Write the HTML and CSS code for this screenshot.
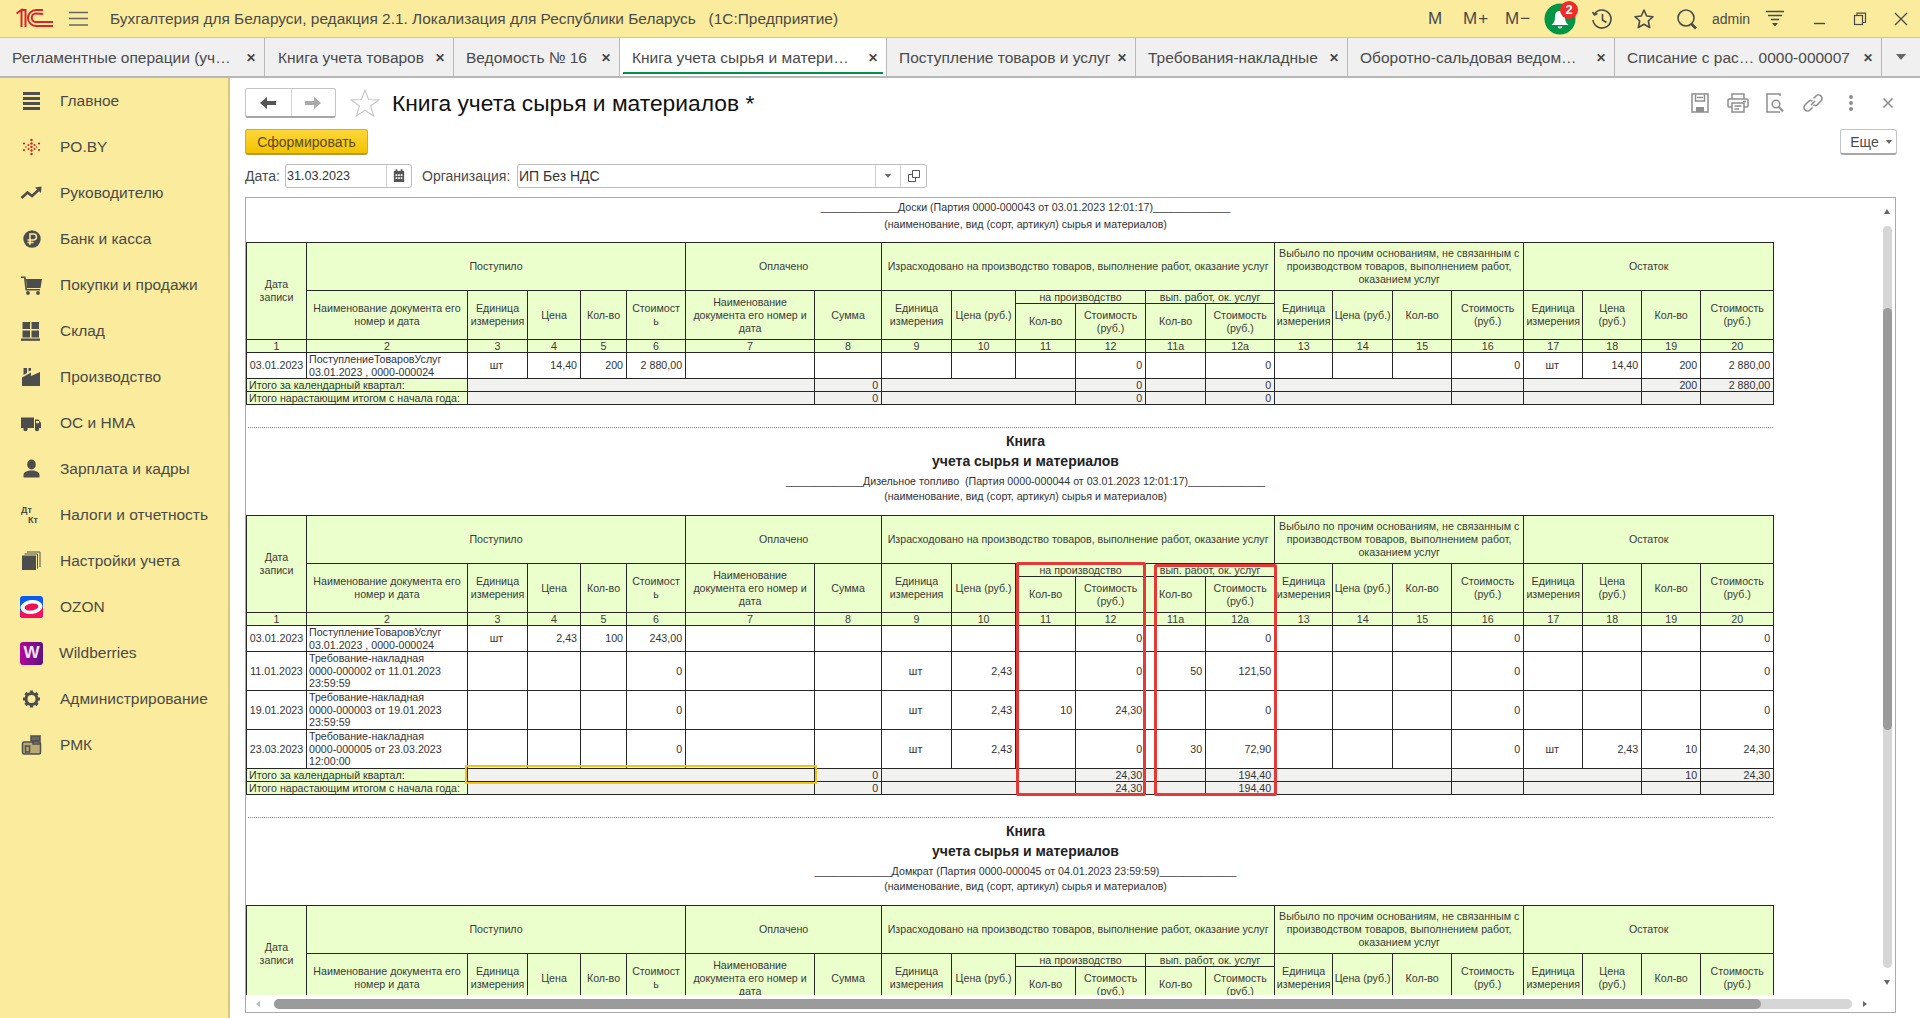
FILE: index.html
```html
<!DOCTYPE html>
<html lang="ru">
<head>
<meta charset="utf-8">
<title>Книга учета сырья и материалов</title>
<link rel="stylesheet" href="styles.css">
</head>
<body>
<header class="topbar">
  <svg class="logo" viewBox="0 0 40 20" width="40" height="20" fill="none" stroke="#d8232a" stroke-width="2"><path d="M0.5 5.5 L5.5 2 V19 M5.5 2 H9.5 V19"/><path d="M27 2 H20 a7.8 7.8 0 0 0 0 16 H37"/><path d="M27 6 C25 5.5 23 5.5 20 5.5 a4 4 0 0 0 0 8.5 H37"/></svg>
  <svg class="burger" viewBox="0 0 20 16" width="20" height="16" stroke="#666" stroke-width="1.4"><path d="M0 1.5H19M0 7.5H19M0 14H19"/></svg>
  <div class="apptitle">Бухгалтерия для Беларуси, редакция 2.1. Локализация для Республики Беларусь&nbsp;&nbsp; (1С:Предприятие)</div>
  <div class="tools">
    <span class="tool mem m1">M</span>
    <span class="tool mem m2">M+</span>
    <span class="tool mem m3">M−</span>
    <span class="tool bell">
      <svg viewBox="0 0 32 32" width="32" height="32"><circle cx="16" cy="16" r="15.5" fill="#009646"/><path d="M16 8 c-4 0-5 3-5 6 c0 4-1 6-3.500 8 H24.500 c-2.500-2-3.500-4-3.500-8 c0-3-1-6-5-6z M13.500 23.500 a2.500 2 0 0 0 5 0z" fill="#fff"/></svg>
      <span class="badge">2</span>
    </span>
    <span class="tool w42"><svg viewBox="0 0 22 22" width="22" height="22" fill="none" stroke="#4a4a4a" stroke-width="1.6"><path d="M3.500 6 A9 9 0 1 1 2 12"/><path d="M1.500 4 L3.500 7 L6.500 5.500" /><path d="M11.500 6 V12 L15.500 14.500"/></svg></span>
    <span class="tool w42"><svg viewBox="0 0 22 22" width="22" height="22" fill="none" stroke="#4a4a4a" stroke-width="1.6" stroke-linejoin="round"><path d="M11 2 L13.700 8 L20 8.700 L15.300 13 L16.700 19.500 L11 16.200 L5.300 19.500 L6.700 13 L2 8.700 L8.300 8z"/></svg></span>
    <span class="tool w43"><svg viewBox="0 0 22 22" width="22" height="22" fill="none" stroke="#4a4a4a" stroke-width="1.6"><circle cx="10" cy="10" r="8"/><path d="M15.500 16 L20 20.500" stroke-width="2.600"/></svg></span>
    <span class="tool admin">admin</span>
    <span class="tool filter"><svg viewBox="0 0 20 18" width="20" height="18" fill="none" stroke="#4a4a4a" stroke-width="1.300"><path d="M1 1.500H19M3 5.500H17M6 9.500H14"/><path d="M7 13 H13 L10 16.500z" fill="#4a4a4a" stroke="none"/></svg></span>
    <span class="tool w38"><svg viewBox="0 0 14 14" width="14" height="14" stroke="#4a4a4a" stroke-width="1.400"><path d="M2 11.500H13"/></svg></span>
    <span class="tool w44"><svg viewBox="0 0 14 14" width="14" height="14" fill="none" stroke="#4a4a4a" stroke-width="1.200"><rect x="1.500" y="3.500" width="8" height="9"/><path d="M4 3.500V1.200H12.500V10.500H9.500"/></svg></span>
    <span class="tool w38"><svg viewBox="0 0 14 14" width="14" height="14" stroke="#4a4a4a" stroke-width="1.300"><path d="M1 1L13 13M13 1L1 13"/></svg></span>
  </div>
</header>

<nav class="tabs">
  <div class="tab t1"><span class="tabtext">Регламентные операции (уч…</span><span class="cl">✕</span></div>
  <div class="tab t2"><span class="tabtext">Книга учета товаров</span><span class="cl">✕</span></div>
  <div class="tab t3"><span class="tabtext">Ведомость № 16</span><span class="cl">✕</span></div>
  <div class="tab t4 active"><span class="tabtext">Книга учета сырья и матери…</span><span class="cl">✕</span></div>
  <div class="tab t5"><span class="tabtext">Поступление товаров и услуг</span><span class="cl">✕</span></div>
  <div class="tab t6"><span class="tabtext">Требования-накладные</span><span class="cl">✕</span></div>
  <div class="tab t7"><span class="tabtext">Оборотно-сальдовая ведом…</span><span class="cl">✕</span></div>
  <div class="tab t8"><span class="tabtext">Списание с рас… 0000-000007</span><span class="cl">✕</span></div>
  <div class="tabmore"><i class="tri"></i></div>
</nav>

<div class="body">
<aside class="side">
  <a class="item"><svg class="si" viewBox="0 0 28 24" fill="#4d4d4d"><rect x="5" y="3" width="17" height="3"/><rect x="5" y="8" width="17" height="3"/><rect x="5" y="13" width="17" height="3"/><rect x="5" y="18" width="17" height="3"/></svg>Главное</a>
  <a class="item"><svg class="si" viewBox="0 0 28 24" fill="#d2221c"><circle cx="13.500" cy="5" r="1.200"/><circle cx="13.500" cy="8.500" r="1.200"/><circle cx="13.500" cy="12" r="1.200"/><circle cx="13.500" cy="15.500" r="1.200"/><circle cx="13.500" cy="19" r="1.200"/><circle cx="10.500" cy="10" r="1"/><circle cx="10.500" cy="14" r="1"/><circle cx="16.500" cy="10" r="1"/><circle cx="16.500" cy="14" r="1"/><circle cx="6" cy="8.500" r="1.100"/><circle cx="6" cy="15" r="1.100"/><circle cx="21" cy="8.500" r="1.100"/><circle cx="21" cy="15" r="1.100"/><circle cx="18.500" cy="12" r=".8"/><circle cx="8" cy="12" r=".8"/></svg>PO.BY</a>
  <a class="item"><svg class="si" viewBox="0 0 28 24" fill="none" stroke="#4d4d4d" stroke-width="2.600"><path d="M3.500 17 L9.500 11.500 L14 15 L21 8.500"/><path d="M17 6.500 L23.500 5.500 L23 12z" fill="#4d4d4d" stroke="none"/></svg>Руководителю</a>
  <a class="item"><svg class="si" viewBox="0 0 28 24"><circle cx="14" cy="12" r="8.700" fill="#4d4d4d"/><path d="M12 18 V7 H15.500 a2.700 2.700 0 0 1 0 6 H9.500 M9.500 15.500 H15.500" fill="none" stroke="#fbec9d" stroke-width="1.500"/></svg>Банк и касса</a>
  <a class="item"><svg class="si" viewBox="0 0 28 24" fill="#4d4d4d"><path d="M3 3.500 H7.500 L9 16 H22 V17.500 H7.500 L6 5 H3z"/><path d="M8 6 H24 L22.500 15 H9z"/><circle cx="10" cy="20" r="1.900"/><circle cx="20" cy="20" r="1.900"/></svg>Покупки и продажи</a>
  <a class="item"><svg class="si" viewBox="0 0 28 24" fill="#4d4d4d"><rect x="4.500" y="3" width="7.500" height="7"/><rect x="13.500" y="3" width="7.500" height="7"/><rect x="4.500" y="11.500" width="7.500" height="7"/><rect x="13.500" y="11.500" width="7.500" height="7"/><rect x="3" y="19.500" width="19" height="2.300"/></svg>Склад</a>
  <a class="item"><svg class="si" viewBox="0 0 28 24" fill="#4d4d4d"><path d="M4 21 V12.500 L13 7.500 V11 L22 7 V21z"/><path d="M5.500 3 H9 V8 L5.500 10z M10.500 3 H13 V5.500 L10.500 6.500z"/></svg>Производство</a>
  <a class="item"><svg class="si" viewBox="0 0 28 24" fill="#4d4d4d"><path d="M3 6.500 H16 V17 H3z"/><path d="M17 8.500 H20.500 L23 12 V17 H17z"/><circle cx="7.500" cy="18" r="2.200"/><circle cx="19" cy="18" r="2.200"/><rect x="18" y="10" width="3" height="2.200" fill="#fbec9d"/></svg>ОС и НМА</a>
  <a class="item"><svg class="si" viewBox="0 0 28 24" fill="#4d4d4d"><ellipse cx="13.500" cy="7.500" rx="4.300" ry="5"/><path d="M5.500 20.500 V18 c0-3 3.500-4.500 8-4.500 s8 1.500 8 4.500 V20.500z"/></svg>Зарплата и кадры</a>
  <a class="item"><span class="dtkt"><b>Дт</b><b class="kt">Кт</b></span>Налоги и отчетность</a>
  <a class="item"><svg class="si" viewBox="0 0 28 24" fill="none" stroke="#4d4d4d"><rect x="4" y="6.500" width="14" height="14.500" fill="#4d4d4d" stroke="none"/><path d="M6.500 5 H19.500 V19.500 M9 3 H22 V18" stroke-width="1"/></svg>Настройки учета</a>
  <a class="item"><svg class="si" viewBox="0 0 28 24"><rect x="2" y="1" width="23" height="22" rx="3" fill="#0a5cf0"/><path d="M2 17 L25 12 V20 a3 3 0 0 1 -3 3 H5 a3 3 0 0 1 -3 -3z" fill="#f4125e"/><ellipse cx="13.500" cy="12" rx="11" ry="7" fill="#fff" transform="rotate(-6 13.500 12)"/><ellipse cx="13.500" cy="12" rx="7" ry="3.500" fill="#ec1255" transform="rotate(-8 13.500 12)"/></svg>OZON</a>
  <a class="item"><span class="wb">W</span>Wildberries</a>
  <a class="item"><svg class="si" viewBox="0 0 28 24"><circle cx="13.500" cy="12" r="5.500" fill="none" stroke="#4d4d4d" stroke-width="3"/><path d="M13.500 3.500 V6 M13.500 18 V20.500 M5 12 H7.500 M19.500 12 H22 M7.500 6 L9.300 7.800 M17.700 16.200 L19.500 18 M19.500 6 L17.700 7.800 M9.300 16.200 L7.500 18" stroke="#4d4d4d" stroke-width="3.200"/></svg>Администрирование</a>
  <a class="item"><svg class="si" viewBox="0 0 28 24" fill="none" stroke="#4d4d4d" stroke-width="1.500"><rect x="4.500" y="9" width="18" height="12" rx="1.500" fill="#b8aa72"/><rect x="13" y="3" width="9" height="5" fill="#6a6a5a"/><path d="M15 8 V11 H22 M7.500 13 H11.500 V19 H7.500z"/></svg>РМК</a>
</aside>

<main class="main">
  <div class="rowhead">
    <div class="navbtns">
      <span class="nb"><svg viewBox="0 0 16 14" width="16" height="14" fill="#555"><path d="M0 7 L7 1 V5 H16 V9 H7 V13z"/></svg></span>
      <span class="nb"><svg viewBox="0 0 16 14" width="16" height="14" fill="#aaa"><path d="M16 7 L9 1 V5 H0 V9 H9 V13z"/></svg></span>
    </div>
    <svg class="bigstar" viewBox="0 0 30 28" width="30" height="28" fill="none" stroke="#c9c9c9" stroke-width="1.200"><path d="M15 1 L18.500 10.500 L29 10.800 L20.700 17 L23.600 27 L15 21.300 L6.400 27 L9.300 17 L1 10.800 L11.500 10.500z"/></svg>
    <h1 class="title">Книга учета сырья и материалов *</h1>
    <div class="formicons">
      <svg viewBox="0 0 20 20" width="20" height="20" fill="none" stroke="#8e8e8e" stroke-width="1.500"><path d="M2 1 H18 V19 H2z"/><path d="M5.500 1.500 V8 H14.500 V1.500 M7 4.500H13"/><rect x="6" y="14" width="8" height="5" fill="#8e8e8e" stroke="none"/></svg>
      <svg viewBox="0 0 22 20" width="22" height="20" fill="none" stroke="#8e8e8e" stroke-width="1.500"><path d="M5 6 V1 H17 V6"/><path d="M5 14 H2 a1 1 0 0 1-1-1 V7 a1 1 0 0 1 1-1 H20 a1 1 0 0 1 1 1 V13 a1 1 0 0 1-1 1 H17"/><rect x="5" y="10" width="12" height="9"/><path d="M7.500 13 H14.500 M7.500 16 H12 M16 8.500H19"/></svg>
      <svg viewBox="0 0 20 20" width="20" height="20" fill="none" stroke="#8e8e8e" stroke-width="1.500"><path d="M15 3 V1 H2 V19 H15"/><circle cx="11" cy="11" r="3.800"/><path d="M14 14 L18 18.500" stroke-width="2"/></svg>
      <svg viewBox="0 0 20 20" width="20" height="20" fill="none" stroke="#8e8e8e" stroke-width="1.600"><path d="M8 12 L12 8 M10.500 5.500 L13 3 a3.500 3.500 0 0 1 5 5 L14.500 11.500 a3.500 3.500 0 0 1-4 .5 M9.500 14.500 L7 17 a3.500 3.500 0 0 1-5-5 L5.500 8.500 a3.500 3.500 0 0 1 4-.5"/></svg>
      <svg class="dots" viewBox="0 0 6 20" width="6" height="20" fill="#8e8e8e"><circle cx="3" cy="4" r="2"/><circle cx="3" cy="10" r="2"/><circle cx="3" cy="16" r="2"/></svg>
      <svg viewBox="0 0 12 12" width="12" height="12" stroke="#8e8e8e" stroke-width="1.600"><path d="M1.500 1.500L10.500 10.500M10.500 1.500L1.500 10.500"/></svg>
    </div>
  </div>

  <div class="rowbtn">
    <button class="primary">Сформировать</button>
    <button class="more">Еще<i class="tri small"></i></button>
  </div>

  <div class="rowfields">
    <label class="lbl">Дата:</label>
    <div class="field fdate"><span class="val">31.03.2023</span><span class="fb fcal"><svg viewBox="0 0 14 16" width="12" height="14" fill="#555"><path d="M1 2 H13 V15 H1z"/><path d="M3 0 H5 V3 H3z M9 0 H11 V3 H9z"/><path d="M3 6H5V8H3z M6 6H8V8H6z M9 6H11V8H9z M3 9.500H5V11.500H3z M6 9.500H8V11.500H6z M9 9.500H11V11.500H9z" fill="#fff"/></svg></span></div>
    <label class="lbl org">Организация:</label>
    <div class="field forg"><span class="val">ИП Без НДС</span><span class="fb fdrop"><i class="tri small"></i></span><span class="fb fopen"><svg viewBox="0 0 14 14" width="14" height="14" fill="none" stroke="#555" stroke-width="1"><path d="M5.500 1.500 H12.500 V8.500 H5.500z M5.500 5.500 H1.500 V12.500 H8.500 V8.500"/></svg></span></div>
  </div>

  <section class="report">
    <div class="sheet">

      <div class="head first">
        <div class="pname">_____________Доски (Партия 0000-000043 от 03.01.2023 12:01:17)_____________</div>
        <div class="pcap">(наименование, вид (сорт, артикул) сырья и материалов)</div>
      </div>
      <table class="grid">
        <colgroup><col><col><col><col><col><col><col><col><col><col><col><col><col><col><col><col><col><col><col><col><col><col></colgroup>
        <thead>
          <tr class="h1r"><th rowspan="3">Дата<br>записи</th><th colspan="5">Поступило</th><th colspan="2">Оплачено</th><th colspan="6">Израсходовано на производство товаров, выполнение работ, оказание услуг</th><th colspan="4">Выбыло по прочим основаниям, не связанным с производством товаров, выполнением работ, оказанием услуг</th><th colspan="4">Остаток</th></tr>
          <tr class="h2r"><th rowspan="2">Наименование документа его<br>номер и дата</th><th rowspan="2">Единица<br>измерения</th><th rowspan="2">Цена</th><th rowspan="2">Кол-во</th><th rowspan="2">Стоимост<br>ь</th><th rowspan="2">Наименование<br>документа его номер и<br>дата</th><th rowspan="2">Сумма</th><th rowspan="2">Единица<br>измерения</th><th rowspan="2">Цена (руб.)</th><th colspan="2">на производство</th><th colspan="2">вып. работ, ок. услуг</th><th rowspan="2">Единица<br>измерения</th><th rowspan="2">Цена (руб.)</th><th rowspan="2">Кол-во</th><th rowspan="2">Стоимость<br>(руб.)</th><th rowspan="2">Единица<br>измерения</th><th rowspan="2">Цена<br>(руб.)</th><th rowspan="2">Кол-во</th><th rowspan="2">Стоимость<br>(руб.)</th></tr>
          <tr class="h3r"><th>Кол-во</th><th>Стоимость<br>(руб.)</th><th>Кол-во</th><th>Стоимость<br>(руб.)</th></tr>
          <tr class="nr"><th>1</th><th>2</th><th>3</th><th>4</th><th>5</th><th>6</th><th>7</th><th>8</th><th>9</th><th>10</th><th>11</th><th>12</th><th>11а</th><th>12а</th><th>13</th><th>14</th><th>15</th><th>16</th><th>17</th><th>18</th><th>19</th><th>20</th></tr>
        </thead>
        <tbody>
          <tr class="d2"><td class="dt">03.01.2023</td><td class="tx">ПоступлениеТоваровУслуг<br>03.01.2023 , 0000-000024</td><td class="ct">шт</td><td>14,40</td><td>200</td><td>2 880,00</td><td></td><td></td><td></td><td></td><td></td><td>0</td><td></td><td>0</td><td></td><td></td><td></td><td>0</td><td class="ct">шт</td><td>14,40</td><td>200</td><td>2 880,00</td></tr>
          <tr class="tot"><td colspan="2" class="tl">Итого за календарный квартал:</td><td colspan="5"></td><td>0</td><td colspan="3"></td><td>0</td><td></td><td>0</td><td colspan="3"></td><td></td><td colspan="2"></td><td>200</td><td>2 880,00</td></tr>
          <tr class="tot"><td colspan="2" class="tl">Итого нарастающим итогом с начала года:</td><td colspan="5"></td><td>0</td><td colspan="3"></td><td>0</td><td></td><td>0</td><td colspan="3"></td><td></td><td colspan="2"></td><td></td><td></td></tr>
        </tbody>
      </table>

      <div class="dotted"></div>
      <div class="head">
        <div class="btitle">Книга</div>
        <div class="btitle">учета сырья и материалов</div>
        <div class="pname">_____________Дизельное топливо  (Партия 0000-000044 от 03.01.2023 12:01:17)_____________</div>
        <div class="pcap">(наименование, вид (сорт, артикул) сырья и материалов)</div>
      </div>
      <div class="gridwrap">
      <table class="grid">
        <colgroup><col><col><col><col><col><col><col><col><col><col><col><col><col><col><col><col><col><col><col><col><col><col></colgroup>
        <thead>
          <tr class="h1r"><th rowspan="3">Дата<br>записи</th><th colspan="5">Поступило</th><th colspan="2">Оплачено</th><th colspan="6">Израсходовано на производство товаров, выполнение работ, оказание услуг</th><th colspan="4">Выбыло по прочим основаниям, не связанным с производством товаров, выполнением работ, оказанием услуг</th><th colspan="4">Остаток</th></tr>
          <tr class="h2r"><th rowspan="2">Наименование документа его<br>номер и дата</th><th rowspan="2">Единица<br>измерения</th><th rowspan="2">Цена</th><th rowspan="2">Кол-во</th><th rowspan="2">Стоимост<br>ь</th><th rowspan="2">Наименование<br>документа его номер и<br>дата</th><th rowspan="2">Сумма</th><th rowspan="2">Единица<br>измерения</th><th rowspan="2">Цена (руб.)</th><th colspan="2">на производство</th><th colspan="2">вып. работ, ок. услуг</th><th rowspan="2">Единица<br>измерения</th><th rowspan="2">Цена (руб.)</th><th rowspan="2">Кол-во</th><th rowspan="2">Стоимость<br>(руб.)</th><th rowspan="2">Единица<br>измерения</th><th rowspan="2">Цена<br>(руб.)</th><th rowspan="2">Кол-во</th><th rowspan="2">Стоимость<br>(руб.)</th></tr>
          <tr class="h3r"><th>Кол-во</th><th>Стоимость<br>(руб.)</th><th>Кол-во</th><th>Стоимость<br>(руб.)</th></tr>
          <tr class="nr"><th>1</th><th>2</th><th>3</th><th>4</th><th>5</th><th>6</th><th>7</th><th>8</th><th>9</th><th>10</th><th>11</th><th>12</th><th>11а</th><th>12а</th><th>13</th><th>14</th><th>15</th><th>16</th><th>17</th><th>18</th><th>19</th><th>20</th></tr>
        </thead>
        <tbody>
          <tr class="d2"><td class="dt">03.01.2023</td><td class="tx">ПоступлениеТоваровУслуг<br>03.01.2023 , 0000-000024</td><td class="ct">шт</td><td>2,43</td><td>100</td><td>243,00</td><td></td><td></td><td></td><td></td><td></td><td>0</td><td></td><td>0</td><td></td><td></td><td></td><td>0</td><td></td><td></td><td></td><td>0</td></tr>
          <tr class="d3"><td class="dt">11.01.2023</td><td class="tx">Требование-накладная<br>0000-000002 от 11.01.2023<br>23:59:59</td><td></td><td></td><td></td><td>0</td><td></td><td></td><td class="ct">шт</td><td>2,43</td><td></td><td>0</td><td>50</td><td>121,50</td><td></td><td></td><td></td><td>0</td><td></td><td></td><td></td><td>0</td></tr>
          <tr class="d3"><td class="dt">19.01.2023</td><td class="tx">Требование-накладная<br>0000-000003 от 19.01.2023<br>23:59:59</td><td></td><td></td><td></td><td>0</td><td></td><td></td><td class="ct">шт</td><td>2,43</td><td>10</td><td>24,30</td><td></td><td>0</td><td></td><td></td><td></td><td>0</td><td></td><td></td><td></td><td>0</td></tr>
          <tr class="d3"><td class="dt">23.03.2023</td><td class="tx">Требование-накладная<br>0000-000005 от 23.03.2023<br>12:00:00</td><td></td><td></td><td></td><td>0</td><td></td><td></td><td class="ct">шт</td><td>2,43</td><td></td><td>0</td><td>30</td><td>72,90</td><td></td><td></td><td></td><td>0</td><td class="ct">шт</td><td>2,43</td><td>10</td><td>24,30</td></tr>
          <tr class="tot"><td colspan="2" class="tl">Итого за календарный квартал:</td><td colspan="5"></td><td>0</td><td colspan="3"></td><td>24,30</td><td></td><td>194,40</td><td colspan="3"></td><td></td><td colspan="2"></td><td>10</td><td>24,30</td></tr>
          <tr class="tot"><td colspan="2" class="tl">Итого нарастающим итогом с начала года:</td><td colspan="5"></td><td>0</td><td colspan="3"></td><td>24,30</td><td></td><td>194,40</td><td colspan="3"></td><td></td><td colspan="2"></td><td></td><td></td></tr>
        </tbody>
      </table>
      <div class="mark red1"></div>
      <div class="mark red2"></div>
      <div class="mark sel"></div>
      </div>

      <div class="dotted"></div>
      <div class="head">
        <div class="btitle">Книга</div>
        <div class="btitle">учета сырья и материалов</div>
        <div class="pname">_____________Домкрат (Партия 0000-000045 от 04.01.2023 23:59:59)_____________</div>
        <div class="pcap">(наименование, вид (сорт, артикул) сырья и материалов)</div>
      </div>
      <table class="grid">
        <colgroup><col><col><col><col><col><col><col><col><col><col><col><col><col><col><col><col><col><col><col><col><col><col></colgroup>
        <thead>
          <tr class="h1r"><th rowspan="3">Дата<br>записи</th><th colspan="5">Поступило</th><th colspan="2">Оплачено</th><th colspan="6">Израсходовано на производство товаров, выполнение работ, оказание услуг</th><th colspan="4">Выбыло по прочим основаниям, не связанным с производством товаров, выполнением работ, оказанием услуг</th><th colspan="4">Остаток</th></tr>
          <tr class="h2r"><th rowspan="2">Наименование документа его<br>номер и дата</th><th rowspan="2">Единица<br>измерения</th><th rowspan="2">Цена</th><th rowspan="2">Кол-во</th><th rowspan="2">Стоимост<br>ь</th><th rowspan="2">Наименование<br>документа его номер и<br>дата</th><th rowspan="2">Сумма</th><th rowspan="2">Единица<br>измерения</th><th rowspan="2">Цена (руб.)</th><th colspan="2">на производство</th><th colspan="2">вып. работ, ок. услуг</th><th rowspan="2">Единица<br>измерения</th><th rowspan="2">Цена (руб.)</th><th rowspan="2">Кол-во</th><th rowspan="2">Стоимость<br>(руб.)</th><th rowspan="2">Единица<br>измерения</th><th rowspan="2">Цена<br>(руб.)</th><th rowspan="2">Кол-во</th><th rowspan="2">Стоимость<br>(руб.)</th></tr>
          <tr class="h3r"><th>Кол-во</th><th>Стоимость<br>(руб.)</th><th>Кол-во</th><th>Стоимость<br>(руб.)</th></tr>
        </thead>
      </table>
    </div>

    <div class="vbar"><div class="vthumb"></div></div>
    <i class="arr aup"></i><i class="arr adown"></i>
    <div class="hbar"><div class="hthumb"></div></div>
    <i class="arr aleft"></i><i class="arr aright"></i>
  </section>
</main>
</div>
</body>
</html>
```

FILE: styles.css
```css
* { box-sizing: border-box; }
html, body { margin: 0; height: 100%; }
body {
  width: 1920px; height: 1018px; overflow: hidden;
  font-family: "Liberation Sans", Arial, sans-serif;
  color: #4a4a4a; background: #fff;
  display: flex; flex-direction: column;
}

/* top bar */
.topbar {
  height: 38px; flex: none; background: #fbec9d;
  border-bottom: 1px solid #d9c77f;
  display: flex; align-items: center; padding-left: 16px;
}
.logo { flex: none; margin-top: -1px; }
.burger { flex: none; margin-left: 13px; }
.apptitle { margin-left: 21px; font-size: 15.45px; white-space: nowrap; }
.tools { margin-left: auto; display: flex; align-items: center; height: 37px; }
.tool { display: flex; align-items: center; justify-content: center; height: 37px; flex: none; }
.mem { font-size: 17px; letter-spacing: 1px; justify-content: flex-start; }
.m1 { width: 39px; padding-left: 8px; }
.m2 { width: 42px; padding-left: 4px; }
.m3 { width: 38px; padding-left: 4px; }
.bell { width: 42px; position: relative; }
.badge {
  position: absolute; left: 21px; top: 1px; width: 18px; height: 18px; border-radius: 50%;
  background: #ee2a2a; color: #fff; font-size: 13px; font-weight: 700; line-height: 18px; text-align: center;
}
.w42 { width: 42px; }
.w43 { width: 43px; }
.w38 { width: 38px; }
.w44 { width: 44px; }
.admin { width: 46px; font-size: 14px; }
.filter { width: 46px; padding-right: 4px; }

/* tabs */
.tabs {
  height: 40px; flex: none; background: #f0f0f0;
  border-bottom: 2px solid #b7b7b7;
  display: flex;
}
.tab {
  display: flex; align-items: center; justify-content: space-between;
  height: 38px; padding: 1px 7px 0 12px; border-right: 1px solid #b9b9b9;
  font-size: 15.5px; white-space: nowrap; color: #4a4a4a; flex: none; position: relative;
}
.tabtext { overflow: hidden; }
.t1 { width: 265px; }
.t2 { width: 189px; }
.t2 .tabtext { padding-left: 1px; }
.t3 { width: 166px; }
.t4 { width: 267px; }
.t5 { width: 249px; }
.t6 { width: 212px; }
.t7 { width: 267px; }
.t8 { width: 267px; }
.active { background: #fff; }
.active::after {
  content: ""; position: absolute; left: 3px; right: 3px; bottom: 2px; height: 2px; background: #00904a;
}
.cl { font-size: 12px; font-weight: 700; color: #444; width: 12px; text-align: center; }
.tabmore { flex: 1; display: flex; align-items: center; justify-content: center; }
.tri { display: block; width: 0; height: 0; border-left: 5px solid transparent; border-right: 5px solid transparent; border-top: 6px solid #666; }
.tri.small { border-left-width: 3px; border-right-width: 3px; border-top-width: 4px; }

/* layout */
.body { flex: 1; display: flex; min-height: 0; }
.side { width: 230px; flex: none; background: #fbec9d; border-right: 2px solid #d9c77f; }
.item { display: flex; align-items: center; height: 46px; padding-left: 18px; font-size: 15.5px; color: #4a4a4a; white-space: nowrap; }
.si { width: 28px; height: 24px; flex: none; margin-right: 14px; }
.dtkt { width: 28px; height: 24px; margin-right: 14px; flex: none; display: block; position: relative; font-size: 9px; line-height: 10px; padding: 2px 0 0 3px; }
.dtkt b { display: block; }
.dtkt .kt { padding-left: 7px; }
.wb {
  width: 23px; height: 23px; margin: 0 16px 0 2px; flex: none; border-radius: 3px;
  background: linear-gradient(90deg, #b3069a, #5c1380); color: #f3e3f5; font-weight: 700; font-size: 17px;
  display: flex; align-items: center; justify-content: center;
}

/* main */
.main { flex: 1; min-width: 0; padding: 10px 24px 5px 15px; display: flex; flex-direction: column; }
.rowhead { display: flex; align-items: center; height: 30px; flex: none; }
.navbtns {
  display: flex; height: 30px; width: 91px; border: 1px solid #c4c4c4; border-bottom: 2px solid #a6a6a6; border-radius: 3px; background: #fff;
}
.nb { width: 45px; display: flex; align-items: center; justify-content: center; }
.nb + .nb { border-left: 1px solid #d4d4d4; }
.bigstar { margin-left: 14px; flex: none; }
.title { margin: 1px 0 0 12px; font-size: 22.8px; font-weight: 400; color: #111; white-space: nowrap; }
.formicons {
  margin-left: auto; margin-right: -11px;
  display: grid; grid-template-columns: repeat(6, 37.6px); justify-items: center; align-items: center;
}
.rowbtn { display: flex; justify-content: space-between; margin-top: 11px; height: 26px; flex: none; }
.primary {
  width: 123px; height: 26px; padding: 0; border: 1px solid #dcae06; border-bottom: 2px solid #b69a3a; border-radius: 3px;
  background: linear-gradient(#fdd73a, #f3c200); color: #5a4a10; font: 14px "Liberation Sans", Arial, sans-serif;
}
.more {
  width: 57px; height: 26px; margin-right: -1px; padding: 0 0 0 5px; border: 1px solid #c4c4c4; border-bottom: 2px solid #a6a6a6; border-radius: 3px;
  background: #fff; color: #4a4a4a; font: 14px "Liberation Sans", Arial, sans-serif;
  display: flex; align-items: center; justify-content: center; gap: 7px;
}
.rowfields { display: flex; align-items: center; margin-top: 9px; height: 24px; flex: none; font-size: 14px; }
.lbl { width: 40px; flex: none; }
.lbl.org { width: 95px; margin-left: 10px; }
.field { height: 24px; border: 1px solid #bdbdbd; border-radius: 3px; display: flex; align-items: center; background: #fff; flex: none; color: #333; }
.val { flex: 1; padding-left: 1px; font-size: 14px; }
.fdate { width: 127px; }
.fdate .val { font-size: 12.6px; }
.forg { width: 410px; }
.fb { height: 22px; display: flex; align-items: center; justify-content: center; border-left: 1px solid #d0d0d0; }
.fcal { width: 25px; }
.fdrop { width: 25px; }
.fopen { width: 26px; }

/* report */
.report { position: relative; margin-top: 9px; height: 816px; flex: none; border: 1px solid #ababab; background: #fff; }
.sheet { height: 797px; overflow: hidden; color: #333; font-size: 10.67px; }
.head { width: 1527px; padding-left: 32px; text-align: center; }
.btitle { height: 20px; line-height: 20px; font-size: 14px; font-weight: 700; color: #222; }
.btitle:first-child { margin-top: 3px; }
.pname { height: 14px; line-height: 12px; margin-top: 4px; white-space: pre; overflow: visible; }
.pcap { height: 13px; line-height: 13px; margin-top: 1px; margin-bottom: 12px; }
.first .pname { margin-top: 3px; }
.first .pcap { margin-top: 3px; margin-bottom: 11px; }
.dotted { width: 1525px; margin: 22px 0 0 2px; border-top: 1px dotted #8a8a8a; }
.gridwrap { position: relative; width: 1527px; }
.grid { width: 1527px; table-layout: fixed; border-collapse: collapse; font-size: 10.67px; }
.grid col:nth-child(1) { width: 60px; }
.grid col:nth-child(2) { width: 161px; }
.grid col:nth-child(3) { width: 60px; }
.grid col:nth-child(4) { width: 53px; }
.grid col:nth-child(5) { width: 46px; }
.grid col:nth-child(6) { width: 59px; }
.grid col:nth-child(7) { width: 129px; }
.grid col:nth-child(8) { width: 67px; }
.grid col:nth-child(9) { width: 70px; }
.grid col:nth-child(10) { width: 64px; }
.grid col:nth-child(11) { width: 60px; }
.grid col:nth-child(12) { width: 70px; }
.grid col:nth-child(13) { width: 60px; }
.grid col:nth-child(14) { width: 69px; }
.grid col:nth-child(15) { width: 58px; }
.grid col:nth-child(16) { width: 60px; }
.grid col:nth-child(17) { width: 59px; }
.grid col:nth-child(18) { width: 72px; }
.grid col:nth-child(19) { width: 59px; }
.grid col:nth-child(20) { width: 59px; }
.grid col:nth-child(21) { width: 59px; }
.grid col:nth-child(22) { width: 73px; }
.grid th, .grid td { border: 1px solid #262626; padding: 0 1px; overflow: hidden; white-space: nowrap; vertical-align: middle; }
.grid th { background: #eaffcc; font-weight: 400; text-align: center; line-height: 13px; color: #3a3a3a; }
.h1r th:nth-child(5) { white-space: normal; }
.h1r { height: 48px; }
.h2r { height: 13px; }
.h2r th { line-height: 12px; }
.h2r th[rowspan] { line-height: 13px; }
.h3r { height: 36px; }
.nr { height: 13px; }
.nr th { line-height: 12px; }
.grid td { text-align: right; padding-right: 3px; background: #fff; color: #333; }
.grid td.dt { text-align: center; padding: 0; }
.grid td.tx { text-align: left; padding-left: 2px; }
.grid td.ct { text-align: center; }
.d2 { height: 26px; }
.d2 td { line-height: 12.5px; }
.d3 { height: 39px; }
.d3 td { line-height: 12.66px; }
.tot { height: 13px; }
.tot td { line-height: 12px; background: #f1f1ef; }
.grid td.tl { background: #eaffcc; text-align: left; padding-left: 2px; }

.mark { position: absolute; }
.red1 { left: 770px; top: 47px; width: 130px; height: 234px; border: 3px solid #e53935; border-radius: 2px; }
.red2 { left: 908px; top: 49px; width: 123px; height: 232px; border: 3px solid #e53935; border-radius: 2px; }
.sel { left: 219px; top: 250px; width: 352px; height: 19px; border: 2px solid #f5c211; }

/* scrollbars */
.vbar { position: absolute; left: 1637px; top: 28px; width: 9px; height: 742px; background: #d6d6d6; border-radius: 5px; }
.vthumb { position: relative; top: 82px; height: 422px; background: #9b9b9b; border-radius: 5px; }
.hbar { position: absolute; left: 28px; top: 801px; width: 1578px; height: 10px; background: #d6d6d6; border-radius: 5px; }
.hthumb { width: 1487px; height: 10px; background: #9b9b9b; border-radius: 5px; }
.arr { position: absolute; width: 0; height: 0; }
.aup { left: 1638px; top: 11px; border-left: 3px solid transparent; border-right: 3px solid transparent; border-bottom: 5px solid #666; }
.adown { left: 1638px; top: 782px; border-left: 3px solid transparent; border-right: 3px solid transparent; border-top: 5px solid #666; }
.aleft { left: 10px; top: 803px; border-top: 3px solid transparent; border-bottom: 3px solid transparent; border-right: 4px solid #bbb; }
.aright { left: 1617px; top: 803px; border-top: 3px solid transparent; border-bottom: 3px solid transparent; border-left: 4px solid #666; }
```
